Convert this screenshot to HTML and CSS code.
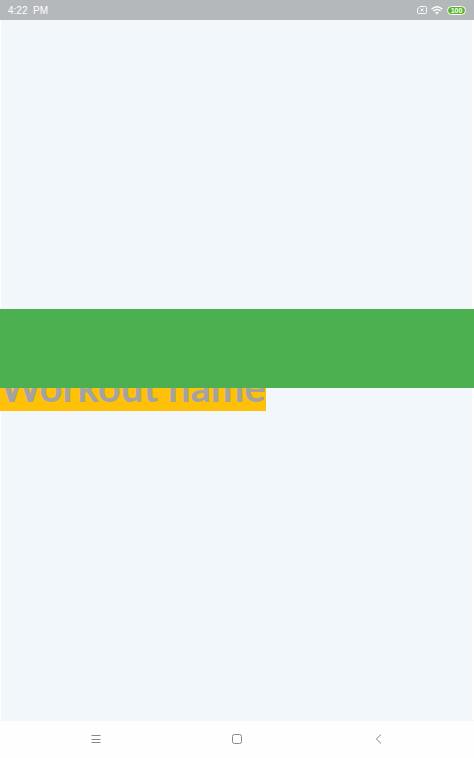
FILE: index.html
```html
<!DOCTYPE html>
<html lang="en">
<head>
    <meta charset="UTF-8">
    <meta name="viewport" content="width=device-width, initial-scale=1.0">
    <title>Workout</title>
    <link rel="stylesheet" href="styles.css">
</head>
<body>
<header class="status-bar">
    <span class="clock">4:22&nbsp; PM</span>
    <div class="status-icons">
        <svg class="sim-icon" width="10" height="8" viewBox="0 0 10 8" fill="none" stroke="currentColor" stroke-width=".9">
            <path d="M3 .5h5.5a1 1 0 0 1 1 1v5a1 1 0 0 1-1 1h-7a1 1 0 0 1-1-1V3z"/>
            <path d="M3.6 2.6l2.8 2.8M6.4 2.6L3.6 5.4"/>
        </svg>
        <svg class="wifi-icon" width="12" height="9" viewBox="0 0 12 9" fill="none" stroke="currentColor" stroke-width="1.3">
            <path d="M.6 3.2Q6-1.6 11.4 3.2M2.4 5.1Q6 2 9.6 5.1"/>
            <path d="M4 6.5Q6 5 8 6.5L6 8.6z" fill="currentColor" stroke="none"/>
        </svg>
        <span class="battery">100</span>
    </div>
</header>

<main class="screen">
    <div class="banner"></div>
    <h1 class="workout-name">Workout name</h1>
</main>

<nav class="nav-bar">
    <button class="nav-button" type="button" aria-label="Menu">
        <svg width="10" height="10" viewBox="0 0 10 10" fill="none" stroke="currentColor">
            <path d="M.5 1.5h9M.5 5.5h9M.5 8.5h9"/>
        </svg>
    </button>
    <button class="nav-button" type="button" aria-label="Home">
        <svg width="10" height="10" viewBox="0 0 10 10" fill="none" stroke="currentColor">
            <rect x=".5" y=".5" width="9" height="9" rx="2"/>
        </svg>
    </button>
    <button class="nav-button" type="button" aria-label="Back">
        <svg width="10" height="10" viewBox="0 0 10 10" fill="none" stroke="currentColor">
            <path d="M8 .5L3.3 5 8 9.5"/>
        </svg>
    </button>
</nav>
</body>
</html>
```

FILE: styles.css
```css
body {
    margin: 0;
    min-height: 100vh;
    display: flex;
    flex-direction: column;
    background-color: #fefefe;
    font-family: Lato, sans-serif;
}

/* Sits over the screen, which runs underneath it */
.status-bar {
    position: absolute;
    top: 0;
    left: 0;
    right: 0;
    height: 20px;
    padding: 0 8px;
    box-sizing: border-box;
    display: flex;
    align-items: center;
    justify-content: space-between;
    background-color: #b4b8bb;
    color: #fff;
    font-family: "Liberation Sans", Arial, sans-serif;
    font-size: 10px;
}

.status-icons {
    display: flex;
    align-items: center;
    gap: 4px;
}

.battery {
    box-sizing: border-box;
    width: 19px;
    height: 9px;
    border: 1px solid #fff;
    border-radius: 5px;
    background-color: #55b52c;
    font-size: 7px;
    font-weight: bold;
    line-height: 7px;
    text-align: center;
}

.screen {
    flex: 1;
    display: flex;
    flex-direction: column;
    justify-content: center;
    align-items: flex-start;
    background-color: #f1f7fb;
    box-shadow: inset 1px 0 #fff, inset -2px 0 #fff;
}

.banner {
    z-index: 1;
    width: 100%;
    height: 79px;
    background-color: #4caf50;
}

.workout-name {
    margin: -24px 0 0;
    background-color: #ffc107;
    color: #a3a3a3;
    font-size: 40px;
    font-weight: bold;
    line-height: 47px;
}

.nav-bar {
    height: 35px;
    padding: 0 25px 2px;
    display: flex;
    justify-content: space-around;
    align-items: center;
    border-top: 1px solid #f4f8fa;
}

.nav-button {
    display: flex;
    padding: 8px;
    border: none;
    background: none;
    color: #888;
    cursor: pointer;
}
```
